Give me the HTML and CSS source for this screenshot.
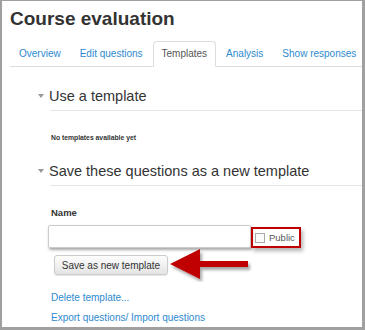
FILE: index.html
```html
<!DOCTYPE html>
<html lang="en">
<head>
    <meta charset="UTF-8">
    <meta name="viewport" content="width=device-width, initial-scale=1.0">
    <title>Course evaluation - Templates</title>
    <link rel="stylesheet" href="styles.css">
</head>
<body>
    <div class="frame">
        <h1 class="page-title">Course evaluation</h1>

        <ul class="tabs">
            <li><a href="#">Overview</a></li>
            <li><a href="#">Edit questions</a></li>
            <li class="active"><a href="#">Templates</a></li>
            <li><a href="#">Analysis</a></li>
            <li><a href="#">Show responses</a></li>
        </ul>

        <div class="content">
            <div class="section">
                <h3 class="section-head"><span class="caret"></span>Use a template</h3>
                <p class="note">No templates available yet</p>
            </div>

            <div class="section">
                <h3 class="section-head"><span class="caret"></span>Save these questions as a new template</h3>

                <label class="field-label" for="tplname">Name</label>
                <div class="name-row">
                    <input type="text" id="tplname" class="name-input">
                    <label class="public-box"><input type="checkbox" class="public-check"> Public</label>
                </div>

                <div class="button-row">
                    <button type="button" class="btn">Save as new template</button>
                    <!-- callout arrow -->
                    <svg class="callout-arrow" width="82" height="34" viewBox="0 0 82 34">
                        <defs>
                            <filter id="arrowShadow" x="-10%" y="-20%" width="130%" height="160%">
                                <feDropShadow dx="2" dy="3" stdDeviation="1.6" flood-color="#000" flood-opacity="0.35"/>
                            </filter>
                        </defs>
                        <polygon points="0,16 30,1 30,13 78,13 78,19 30,19 30,31" fill="#c00000" filter="url(#arrowShadow)"/>
                    </svg>
                </div>
            </div>

            <div class="links">
                <a href="#">Delete template...</a>
                <a href="#">Export questions/ Import questions</a>
            </div>
        </div>
    </div>
</body>
</html>
```

FILE: styles.css
```css
body {
    margin: 0;
    font-family: "Liberation Sans", Arial, sans-serif;
    color: #333;
}

.frame {
    box-sizing: border-box;
    width: 365px;
    height: 330px;
    border-style: solid;
    border-color: #a0a0a0;
    border-width: 1px 3px 3px 2px;
    padding: 0 0 0 8px;
    background: #fff;
    overflow: hidden;
}

.page-title {
    margin: 7px 0 0 0;
    font-size: 19px;
    line-height: 22px;
    font-weight: bold;
    color: #333;
}

.tabs {
    list-style: none;
    margin: 11px 0 0 0;
    padding: 0;
    display: flex;
    border-bottom: 1px solid #ddd;
}

.tabs li {
    flex-shrink: 0;
    margin-right: 1px;
    margin-bottom: -1px;
    border: 1px solid transparent;
    border-radius: 4px 4px 0 0;
}

.tabs a {
    display: block;
    padding: 0 8px;
    font-size: 10px;
    line-height: 24px;
    white-space: nowrap;
    color: #2d8ad0;
    text-decoration: none;
}

.tabs li.active {
    border-color: #ddd;
    border-bottom-color: #fff;
    background: #fff;
}

.tabs li.active a {
    color: #555;
}

.content {
    margin-left: 40px;
}

.section-head {
    display: flex;
    align-items: center;
    margin: 19px 0 0 0;
    padding-bottom: 4px;
    border-bottom: 1px solid #e5e5e5;
    font-size: 14.5px;
    line-height: 20px;
    font-weight: normal;
    color: #333;
}

.caret {
    width: 0;
    height: 0;
    margin-left: -12px;
    margin-right: 5px;
    border-left: 3.5px solid transparent;
    border-right: 3.5px solid transparent;
    border-top: 4px solid #999;
}

.note {
    margin: 22px 0 0 1px;
    font-size: 6.8px;
    line-height: 10px;
    font-weight: bold;
}

.section + .section .section-head {
    margin-top: 18px;
}

.field-label {
    display: block;
    margin: 21px 0 0 1px;
    font-size: 9.5px;
    line-height: 12px;
    font-weight: bold;
}

.name-row {
    display: flex;
    align-items: flex-start;
    margin: 6px 0 0 -2px;
}

.name-input {
    box-sizing: border-box;
    width: 203px;
    height: 23px;
    margin: 0;
    padding: 2px 4px;
    border: 1px solid #ccc;
    border-radius: 2px;
    box-shadow: 1px 2px 3px rgba(0, 0, 0, 0.35);
    background: #fff;
}

.public-box {
    box-sizing: border-box;
    display: flex;
    align-items: center;
    width: 50px;
    height: 21px;
    margin-top: 2px;
    padding-left: 2px;
    border: 2px solid #c00000;
    box-shadow: 2px 3px 4px rgba(0, 0, 0, 0.3);
    font-size: 9.5px;
    color: #555;
}

.public-check {
    appearance: none;
    width: 10px;
    height: 10px;
    margin: 0 4px 0 0;
    border: 1px solid #aaa;
    background: #fafafa;
}

.button-row {
    display: flex;
    align-items: center;
    margin-top: 7px;
}

.btn {
    width: 114px;
    height: 20px;
    margin: 0 0 0 4px;
    padding: 0;
    border: 1px solid #ccc;
    border-radius: 3px;
    background: linear-gradient(#fdfdfd, #e4e4e4);
    box-shadow: 0 1px 1px rgba(0, 0, 0, 0.1);
    font-family: "Liberation Sans", Arial, sans-serif;
    font-size: 10px;
    color: #333;
}

.callout-arrow {
    display: block;
    margin: -7px 0 -7px 2px;
}

.links {
    display: flex;
    flex-direction: column;
    gap: 6px;
    margin: 16px 0 0 1px;
}

.links a {
    font-size: 10px;
    line-height: 14px;
    color: #2d8ad0;
    text-decoration: none;
}
```
